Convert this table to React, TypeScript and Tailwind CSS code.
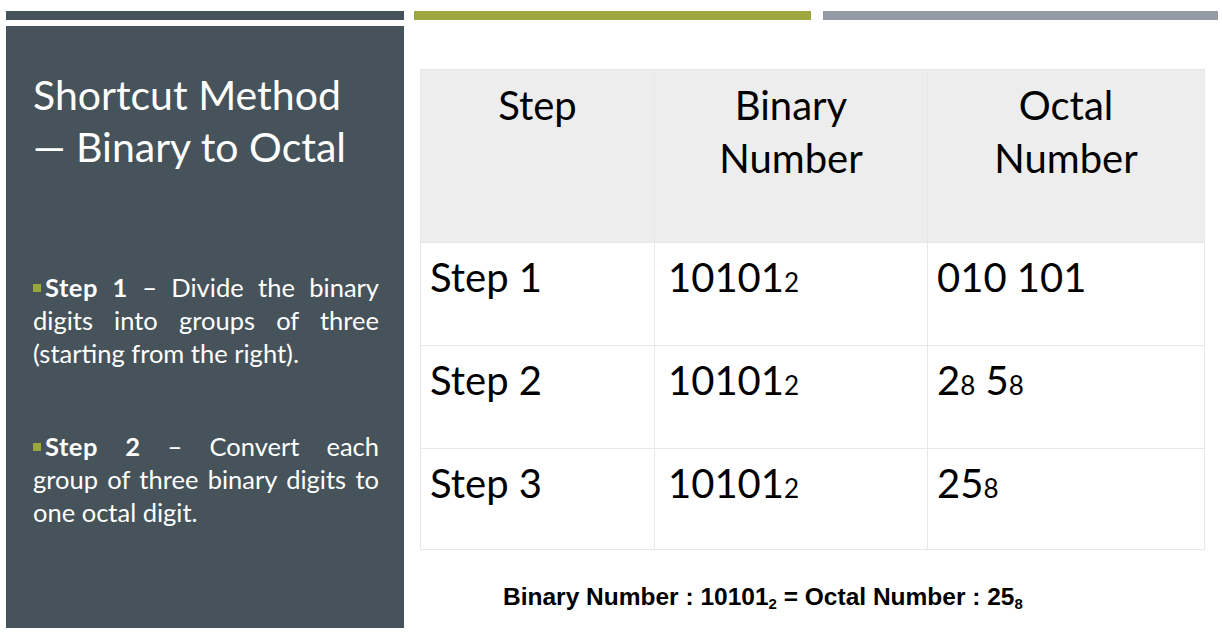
import React from "react";

const gill = { fontFamily: '"Lato", "Open Sans", sans-serif' };

function Bullet() {
  return <span className="inline-block w-[8px] h-[8px] bg-[#9aa63c] mr-[4px] align-[5px]" />;
}

const J = "text-justify [text-align-last:justify]";

export default function App() {
  const cell = "border border-[#e8e8e8] px-[9px] align-top";
  const sub = "text-[26px]";
  return (
    <div className="w-[1222px] h-[637px] bg-white overflow-hidden" style={gill}>
      <div className="flex pt-[11px] pl-[6px]">
        <div className="w-[398px] h-[9px] bg-[#46535a]" />
        <div className="w-[397px] h-[9px] bg-[#9ea63f] ml-[10px]" />
        <div className="w-[395px] h-[9px] bg-[#959ba5] ml-[12px]" />
      </div>
      <div className="flex mt-[6px] pl-[6px]">
        <div className="w-[398px] h-[602px] bg-[#46535a] text-white pl-[27px] pr-[25px] pt-[43px]">
          <div className="text-[41px] leading-[52px]">
            <div>Shortcut Method</div>
            <div>— Binary to Octal</div>
          </div>
          <div className="mt-[98px] text-[25.5px] leading-[33px]">
            <div>
              <div className={J}>
                <Bullet />
                <b className="tracking-[0.5px]">Step 1</b> – Divide the binary
              </div>
              <div className={J}>digits into groups of three</div>
              <div>(starting from the right).</div>
            </div>
            <div className="mt-[60px]">
              <div className={J}>
                <Bullet />
                <b className="tracking-[0.5px]">Step 2</b> – Convert each
              </div>
              <div className={J}>group of three binary digits to</div>
              <div>one octal digit.</div>
            </div>
          </div>
        </div>
        <div className="flex flex-col ml-[16px] pt-[43px]">
          <table className="border-collapse text-[40px] text-black">
            <tbody>
              <tr className="bg-[#ededed] h-[173px]">
                <td className={`${cell} w-[234px] text-center leading-[53px] pt-[9px]`}>Step</td>
                <td className={`${cell} w-[273px] text-center leading-[53px] pt-[9px]`}>
                  Binary<br />Number
                </td>
                <td className={`${cell} w-[277px] text-center leading-[53px] pt-[9px]`}>
                  Octal<br />Number
                </td>
              </tr>
              {[
                ["Step 1", <>010 101</>],
                ["Step 2", <>2<span className={sub}>8</span> 5<span className={sub}>8</span></>],
                ["Step 3", <>25<span className={sub}>8</span></>],
              ].map(([s, o], i) => (
                <tr key={i} className={i === 2 ? "h-[101px]" : "h-[103px]"}>
                  <td className={`${cell} leading-[52px] pt-[8px]`}>{s}</td>
                  <td className={`${cell} leading-[52px] pt-[8px] pl-[13px]`}>
                    10101<span className={sub}>2</span>
                  </td>
                  <td className={`${cell} leading-[52px] pt-[8px]`}>{o}</td>
                </tr>
              ))}
            </tbody>
          </table>
          <div
            className="mt-[32px] ml-[83px] text-[24.5px] leading-[30px] font-bold text-black"
            style={{ fontFamily: '"Liberation Sans", Arial, sans-serif' }}
          >
            Binary Number : 10101<sub className="text-[15px]">2</sub> = Octal Number : 25
            <sub className="text-[15px]">8</sub>
          </div>
        </div>
      </div>
    </div>
  );
}
